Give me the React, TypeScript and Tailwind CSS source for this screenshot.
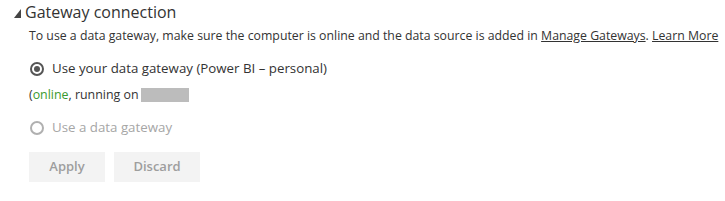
export default function App() {
  return (
    <div className="w-[725px] h-[201px] bg-white text-[#333] font-['Open_Sans',sans-serif] overflow-hidden">
      <div className="flex items-center h-[24px] pl-[14px]">
        <svg width="7" height="9" viewBox="0 0 7 9" className="mt-[2px]">
          <polygon points="7,0 7,9 0,9" fill="#444" />
        </svg>
        <span className="ml-[4px] text-[16px] leading-none text-[#333]">Gateway connection</span>
      </div>
      <div className="pl-[29px] pt-[2px] text-[12.3px]">
        <p className="h-[20px] leading-[20px] whitespace-nowrap">
          To use a data gateway, make sure the computer is online and the data source is added in{' '}
          <a className="underline">Manage Gateways</a>. <a className="underline">Learn More</a>
        </p>
        <label className="flex items-center gap-[8px] mt-[13px] h-[20px] text-[13.3px] pl-[1px]">
          <span className="w-[14px] h-[14px] rounded-full border-2 border-[#555] flex items-center justify-center">
            <span className="w-[6px] h-[6px] rounded-full bg-[#555]" />
          </span>
          <span>Use your data gateway (Power BI – personal)</span>
        </label>
        <div className="flex items-center h-[20px] mt-[6px] text-[12.4px]">
          <span>(</span>
          <span className="text-[#3a9a2e]">online</span>
          <span>, running on</span>
          <span className="ml-[2px] w-[48px] h-[14px] bg-[#bcbcbc]" />
        </div>
        <label className="flex items-center gap-[8px] mt-[13px] h-[20px] text-[13.3px] text-[#a6a6a6] pl-[1px]">
          <span className="w-[14px] h-[14px] rounded-full border-2 border-[#b0b0b0]" />
          <span>Use a data gateway</span>
        </label>
        <div className="flex gap-[9px] mt-[14px]">
          <button className="w-[76px] h-[30px] bg-[#f3f3f3] text-[#9e9e9e] font-semibold text-[13px]">Apply</button>
          <button className="w-[86px] h-[30px] bg-[#f3f3f3] text-[#9e9e9e] font-semibold text-[13px]">Discard</button>
        </div>
      </div>
    </div>
  )
}
